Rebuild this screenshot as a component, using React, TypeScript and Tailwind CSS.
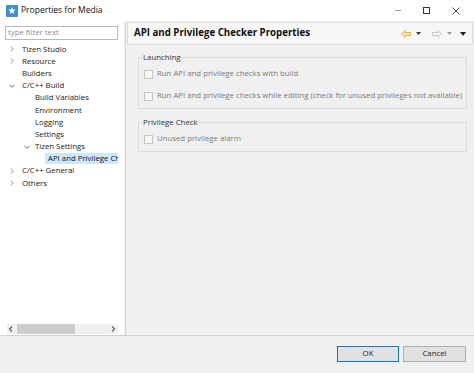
import React from 'react';

const font = { fontFamily: '"Open Sans", "Noto Sans", Arial, sans-serif' };

function Chevron({ open }: { open?: boolean }) {
  return open ? (
    <svg width="6" height="6" viewBox="0 0 6 6" className="shrink-0">
      <path d="M0.5 1.8 L3 4.3 L5.5 1.8" fill="none" stroke="#555" strokeWidth="0.9" />
    </svg>
  ) : (
    <svg width="6" height="6" viewBox="0 0 6 6" className="shrink-0">
      <path d="M1.8 0.5 L4.3 3 L1.8 5.5" fill="none" stroke="#888" strokeWidth="0.9" />
    </svg>
  );
}

type Node = { label: string; level: number; chevron?: 'open' | 'closed'; selected?: boolean };

const tree: Node[] = [
  { label: 'Tizen Studio', level: 0, chevron: 'closed' },
  { label: 'Resource', level: 0, chevron: 'closed' },
  { label: 'Builders', level: 0 },
  { label: 'C/C++ Build', level: 0, chevron: 'open' },
  { label: 'Build Variables', level: 1 },
  { label: 'Environment', level: 1 },
  { label: 'Logging', level: 1 },
  { label: 'Settings', level: 1 },
  { label: 'Tizen Settings', level: 1, chevron: 'open' },
  { label: 'API and Privilege Checker Properties', level: 2, selected: true },
  { label: 'C/C++ General', level: 0, chevron: 'closed' },
  { label: 'Others', level: 0, chevron: 'closed' },
];

const indent = ['pl-[22px]', 'pl-[35px]', 'pl-[48px]'];
const chevPos = ['w-[22px] pl-[9px]', 'w-[35px] pl-[24px]', 'w-[48px] pl-[37px]'];

function CheckRow({ label }: { label: string }) {
  return (
    <div className="flex items-center gap-[4px] h-[22px] pl-[5px] pt-[2px]">
      <div className="w-[9px] h-[9px] border border-[#c4c4c4] bg-[#f7f7f7]" />
      <span className="text-[7.8px] text-[#7a7a7a] whitespace-nowrap">{label}</span>
    </div>
  );
}

export default function App() {
  return (
    <div className="w-[474px] h-[373px] flex flex-col bg-[#f0f0f0] text-[#222] overflow-hidden" style={font}>
      {/* Title bar */}
      <div className="h-[21px] bg-white flex items-center shrink-0">
        <svg width="12" height="12" viewBox="0 0 12 12" className="ml-[6px]">
          <rect width="12" height="12" rx="1" fill="#3d8fd6" />
          <path d="M6 2 L7 4.6 L9.8 4.6 L7.6 6.3 L8.4 9 L6 7.4 L3.6 9 L4.4 6.3 L2.2 4.6 L5 4.6 Z" fill="#fff" />
        </svg>
        <span className="ml-[3px] text-[8.5px] text-[#111]">Properties for Media</span>
        <div className="ml-auto flex items-center h-full">
          <div className="w-[28px] flex justify-center">
            <div className="w-[6px] h-px bg-[#999]" />
          </div>
          <div className="w-[29px] flex justify-center">
            <div className="w-[7px] h-[7px] border border-[#333]" />
          </div>
          <div className="w-[30px] flex justify-center mr-[3px]">
            <svg width="8" height="8" viewBox="0 0 8 8">
              <path d="M0.5 0.5 L7.5 7.5 M7.5 0.5 L0.5 7.5" stroke="#333" strokeWidth="0.9" />
            </svg>
          </div>
        </div>
      </div>

      {/* Body */}
      <div className="flex-1 flex min-h-0">
        {/* Left tree */}
        <div className="w-[124px] bg-white flex flex-col shrink-0">
          <div className="mt-[5px] ml-[5px] w-[113px] h-[14px] border border-[#b9b9b9] flex items-center px-[2px]">
            <span className="text-[7.8px] text-[#8a8a8a]">type filter text</span>
          </div>
          <div className="mt-[3px] w-[118px] overflow-hidden flex-1">
            {tree.map((n) => (
              <div key={n.label} className="h-[12.2px] flex items-center whitespace-nowrap">
                {n.chevron ? (
                  <div className={`${chevPos[n.level]} shrink-0 flex items-center`}>
                    <Chevron open={n.chevron === 'open'} />
                  </div>
                ) : (
                  <div className={`${indent[n.level]} shrink-0`} />
                )}
                <span
                  className={`text-[7.8px] leading-[11px] px-[3px] -ml-[3px] ${
                    n.selected ? 'bg-[#cce8ff] text-[#111]' : 'text-[#222]'
                  }`}
                >
                  {n.label}
                </span>
              </div>
            ))}
          </div>
          <div className="ml-[7px] w-[111px] h-[10px] bg-[#f0f0f0] flex items-center mb-[1px]">
            <svg width="8" height="8" viewBox="0 0 8 8" className="shrink-0">
              <path d="M5 1.5 L2.5 4 L5 6.5" fill="none" stroke="#606060" strokeWidth="1.2" />
            </svg>
            <div className="ml-[2px] w-[58px] h-full bg-[#cdcdcd]" />
            <div className="flex-1" />
            <svg width="8" height="8" viewBox="0 0 8 8" className="shrink-0 mr-[1px]">
              <path d="M3 1.5 L5.5 4 L3 6.5" fill="none" stroke="#606060" strokeWidth="1.2" />
            </svg>
          </div>
        </div>

        {/* divider */}
        <div className="w-[3px] flex shrink-0">
          <div className="w-px bg-[#d6d6d6] ml-px mt-[2px]" />
        </div>

        {/* Right */}
        <div className="flex-1 flex flex-col pr-[1px]">
          <div className="mt-[1px] h-[23px] bg-[#f7f7f7] border border-[#dcdcdc] flex items-center pl-[6px] pr-[6px]">
            <span className="text-[9.7px] font-bold text-[#111] whitespace-nowrap">
              API and Privilege Checker Properties
            </span>
            <div className="ml-auto flex items-center gap-[5px]">
              <svg width="10" height="8" viewBox="0 0 10 8">
                <path d="M0.5 4 L4 0.7 L4 2.5 L9.5 2.5 L9.5 5.5 L4 5.5 L4 7.3 Z" fill="#fde9a8" stroke="#d9a232" strokeWidth="0.8" />
              </svg>
              <svg width="5" height="3" viewBox="0 0 5 3">
                <path d="M0 0 L5 0 L2.5 3 Z" fill="#333" />
              </svg>
              <svg width="10" height="8" viewBox="0 0 10 8" className="ml-[6px]">
                <path d="M9.5 4 L6 0.7 L6 2.5 L0.5 2.5 L0.5 5.5 L6 5.5 L6 7.3 Z" fill="#f7f7f7" stroke="#b8b8b8" strokeWidth="0.8" />
              </svg>
              <svg width="5" height="3" viewBox="0 0 5 3">
                <path d="M0 0 L5 0 L2.5 3 Z" fill="#9a9a9a" />
              </svg>
              <svg width="6" height="4" viewBox="0 0 6 4" className="ml-[3px]">
                <path d="M0 0 L6 0 L3 4 Z" fill="#222" />
              </svg>
            </div>
          </div>

          <div className="pl-[11px] pr-[6px] pt-[7px] flex flex-col gap-[8px]">
            <fieldset className="border border-[#dcdcdc] pb-[2px]">
              <legend className="ml-[4px] text-[7.8px] text-[#333] leading-[10px]">Launching</legend>
              <CheckRow label="Run API and privilege checks with build" />
              <CheckRow label="Run API and privilege checks while editing (check for unused privileges not available)" />
            </fieldset>
            <fieldset className="border border-[#dcdcdc] pb-[2px]">
              <legend className="ml-[4px] text-[7.8px] text-[#333] leading-[10px]">Privilege Check</legend>
              <CheckRow label="Unused privilege alarm" />
            </fieldset>
          </div>
        </div>
      </div>

      {/* Footer */}
      <div className="h-[38px] shrink-0 border-t border-[#d0d0d0] flex items-start justify-end pt-[10px] pr-[8px] gap-[4px]">
        <button className="w-[62px] h-[16px] bg-[#e1e1e1] border border-[#0078d7] text-[7.8px] text-[#222]">OK</button>
        <button className="w-[63px] h-[16px] bg-[#e1e1e1] border border-[#adadad] text-[7.8px] text-[#222]">Cancel</button>
      </div>
    </div>
  );
}
